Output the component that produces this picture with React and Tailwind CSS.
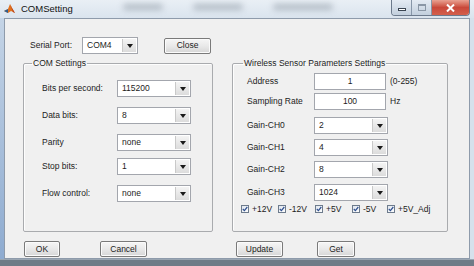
import React from "react";

const font = { fontFamily: '"Liberation Sans", Arial, sans-serif' };

const Arrow = () => (
  <div className="flex h-full w-[14px] shrink-0 items-center justify-center border-l border-[#c9c9c9] bg-gradient-to-b from-[#f4f4f4] to-[#dcdcdc]">
    <svg width="6" height="4" viewBox="0 0 6 4">
      <path d="M0 0 L6 0 L3 4 Z" fill="#1a1a1a" />
    </svg>
  </div>
);

const Combo = ({ value, w = "w-[74px]" }) => (
  <div className={`flex h-[17px] ${w} items-stretch border border-[#a3a6ad] bg-white p-[1px]`}>
    <div className="flex flex-1 items-center pl-[3px] text-[8.5px] text-[#1c1c1c]">{value}</div>
    <Arrow />
  </div>
);

const Edit = ({ value }) => (
  <div className="flex h-[17px] w-[72px] items-center justify-center border border-[#a3a6ad] bg-white text-[8.5px] text-[#1c1c1c]">
    {value}
  </div>
);

const Button = ({ children, w }) => (
  <button
    type="button"
    className={`flex h-[16px] ${w} items-center justify-center rounded-[2px] border border-[#7a7a7a] bg-gradient-to-b from-[#f6f6f6] via-[#e9e9e9] to-[#d6d6d6] text-[8.5px] text-[#1c1c1c] shadow-[inset_0_0_0_1px_#fbfbfb]`}>
    {children}
  </button>
);

const Check = ({ label, w }) => (
  <div className={`flex ${w} items-center`}>
    <div className="flex h-[8px] w-[8px] items-center justify-center border border-[#6d7b8c] bg-gradient-to-br from-[#dfe6ef] to-[#fdfdfd]">
      <svg width="6" height="6" viewBox="0 0 6 6">
        <path d="M0.8 3 L2.4 4.6 L5.3 1" stroke="#2f4f8f" strokeWidth="1.2" fill="none" />
      </svg>
    </div>
    <span className="ml-[3px] text-[8.5px] text-[#1c1c1c]">{label}</span>
  </div>
);

const Group = ({ title, w, legendMl, children }) => (
  <fieldset className={`h-[174px] ${w} rounded-[2px] border border-[#a9abae] shadow-[inset_1px_1px_0_#fdfdfd]`}>
    <legend className={`${legendMl} px-[1px] text-[8.5px] leading-[10px] text-[#1c1c1c]`}>{title}</legend>
    {children}
  </fieldset>
);

const LeftRow = ({ label, value, mt }) => (
  <div className={`flex items-center ${mt}`}>
    <span className="w-[75px] pl-[18px] box-content text-[8.5px] text-[#1c1c1c]">{label}</span>
    <Combo value={value} />
  </div>
);

const RightRow = ({ label, children, mt }) => (
  <div className={`flex items-center ${mt}`}>
    <span className="w-[67px] pl-[14px] box-content text-[8.5px] text-[#1c1c1c]">{label}</span>
    {children}
  </div>
);

export default function App() {
  return (
    <div style={font} className="flex h-[266px] w-[474px] flex-col overflow-hidden bg-[#dbe5ef]">
      {/* title bar */}
      <div className="flex h-[18px] shrink-0 items-start bg-gradient-to-b from-[#e9eff5] to-[#dae4ee]">
        <svg className="ml-[4px] mt-[3px]" width="11" height="11" viewBox="0 0 11 11">
          <path d="M0 8 L4 6 L6 1 L8 5 L11 10 L7 8 L4 10 Z" fill="#e0701e" />
          <path d="M0 8 L4 6 L4 10 Z" fill="#2f5f8f" />
          <path d="M6 1 L8 5 L11 10 L9 9 Z" fill="#b8401a" />
        </svg>
        <span className="ml-[6px] mt-[3px] text-[9.5px] leading-[11px] text-[#111]">COMSetting</span>
        <div className="ml-[50px] mt-[4px] flex gap-[30px] opacity-50">
          <span className="h-[6px] w-[40px] rounded-full bg-[#7f8a96] blur-[3px]" />
          <span className="h-[6px] w-[50px] rounded-full bg-[#7f8a96] blur-[3px]" />
          <span className="h-[6px] w-[60px] rounded-full bg-[#7f8a96] blur-[3px]" />
        </div>
        <div className="ml-auto mr-[4px] flex h-[16px] overflow-hidden rounded-b-[4px] border border-t-0 border-[#6c7a8c]">
          <div className="flex w-[20px] items-center justify-center border-r border-[#8796a8] bg-gradient-to-b from-[#e4ebf3] to-[#c2cfdd]">
            <div className="mt-[3px] h-[3px] w-[8px] border border-[#3a4552] bg-white" />
          </div>
          <div className="flex w-[20px] items-center justify-center border-r border-[#8796a8] bg-gradient-to-b from-[#e4ebf3] to-[#c2cfdd]">
            <div className="h-[7px] w-[8px] border border-[#8a97a6] border-t-2" />
          </div>
          <div className="flex w-[37px] items-center justify-center bg-gradient-to-b from-[#e8a192] via-[#c9483a] to-[#d35f4c]">
            <svg width="9" height="8" viewBox="0 0 9 8">
              <path d="M1 0.5 L8 7.5 M8 0.5 L1 7.5" stroke="#ffffff" strokeWidth="2" />
            </svg>
          </div>
        </div>
      </div>

      <div className="flex flex-1">
        <div className="w-[4px] bg-gradient-to-b from-[#c4d4e6] to-[#8eabd0]" />
        {/* client */}
        <div className="flex w-[466px] flex-col border border-[#8e9bab] bg-[#f0f0f0]">
          <div className="mt-[18px] flex h-[17px] items-center">
            <span className="w-[52px] pl-[25px] box-content text-[8.5px] text-[#1c1c1c]">Serial Port:</span>
            <Combo value="COM4" w="w-[56px]" />
            <div className="ml-[26px]">
              <Button w="w-[47px]">Close</Button>
            </div>
          </div>

          <div className="mt-[4px] flex pl-[18px]">
            <Group title="COM Settings" w="w-[190px]" legendMl="ml-[8px]">
              <div className="flex flex-col pt-[12px]">
                <LeftRow label="Bits per second:" value="115200" />
                <LeftRow label="Data bits:" value="8" mt="mt-[10px]" />
                <LeftRow label="Parity" value="none" mt="mt-[10px]" />
                <LeftRow label="Stop bits:" value="1" mt="mt-[7px]" />
                <LeftRow label="Flow control:" value="none" mt="mt-[10px]" />
              </div>
            </Group>
            <div className="ml-[19px]">
              <Group title="Wireless Sensor Parameters Settings" w="w-[216px]" legendMl="ml-[10px]">
                <div className="flex flex-col pt-[5px]">
                  <RightRow label="Address">
                    <Edit value="1" />
                    <span className="ml-[4px] text-[8.5px] text-[#1c1c1c]">(0-255)</span>
                  </RightRow>
                  <RightRow label="Sampling Rate" mt="mt-[3px]">
                    <Edit value="100" />
                    <span className="ml-[4px] text-[8.5px] text-[#1c1c1c]">Hz</span>
                  </RightRow>
                  <RightRow label="Gain-CH0" mt="mt-[7px]">
                    <Combo value="2" />
                  </RightRow>
                  <RightRow label="Gain-CH1" mt="mt-[5px]">
                    <Combo value="4" />
                  </RightRow>
                  <RightRow label="Gain-CH2" mt="mt-[5px]">
                    <Combo value="8" />
                  </RightRow>
                  <RightRow label="Gain-CH3" mt="mt-[6px]">
                    <Combo value="1024" />
                  </RightRow>
                  <div className="mt-[3px] flex h-[10px] items-center pl-[8px]">
                    <Check label="+12V" w="w-[37px]" />
                    <Check label="-12V" w="w-[37px]" />
                    <Check label="+5V" w="w-[37px]" />
                    <Check label="-5V" w="w-[35px]" />
                    <Check label="+5V_Adj" />
                  </div>
                </div>
              </Group>
            </div>
          </div>

          <div className="mt-[9px] flex pl-[19px]">
            <Button w="w-[36px]">OK</Button>
            <div className="ml-[40px]">
              <Button w="w-[47px]">Cancel</Button>
            </div>
            <div className="ml-[89px]">
              <Button w="w-[47px]">Update</Button>
            </div>
            <div className="ml-[34px]">
              <Button w="w-[38px]">Get</Button>
            </div>
          </div>
        </div>
        <div className="w-[4px] bg-[#d6e1ec]" />
      </div>

      {/* bottom frame */}
      <div className="h-[7px] shrink-0 border-t border-[#9aa6b2] bg-[#6f7b87]" />
    </div>
  );
}
